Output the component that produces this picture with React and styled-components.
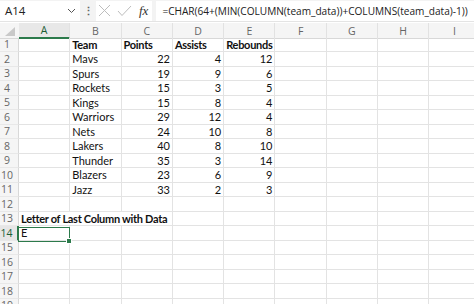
import React from "react";
import styled, { createGlobalStyle } from "styled-components";

const Global = createGlobalStyle`
  html, body { margin: 0; padding: 0; background: #fff; }
  body { width: 474px; height: 304px; overflow: hidden; }
`;

const COLS = ["A", "B", "C", "D", "E", "F", "G", "H", "I"];
const ROWH = 14.5;
const COLW = 51.3;

const data = [
  ["Mavs", 22, 4, 12],
  ["Spurs", 19, 9, 6],
  ["Rockets", 15, 3, 5],
  ["Kings", 15, 8, 4],
  ["Warriors", 29, 12, 4],
  ["Nets", 24, 10, 8],
  ["Lakers", 40, 8, 10],
  ["Thunder", 35, 3, 14],
  ["Blazers", 23, 6, 9],
  ["Jazz", 33, 2, 3],
];

const Page = styled.div`
  width: 474px;
  height: 304px;
  overflow: hidden;
  background: #fff;
  font-family: "Open Sans", sans-serif;
`;

const FormulaBar = styled.div`
  display: flex;
  align-items: center;
  height: 21px;
  background: #f3f3f3;
  border-bottom: 1px solid #e4e4e4;
`;

const NameBox = styled.div`
  width: 80px;
  height: 20px;
  box-sizing: border-box;
  background: #fff;
  display: flex;
  align-items: center;
  justify-content: space-between;
  padding: 0 4px 0 5px;
  font-size: 11.5px;
  color: #222;
`;

const Dots = styled.div`
  width: 16px;
  display: flex;
  justify-content: center;
  color: #666;
  font-size: 11px;
  font-weight: bold;
`;

const IconBox = styled.div`
  display: flex;
  align-items: center;
  gap: 6px;
  height: 20px;
  padding: 0 4px 0 2px;
  background: #fff;
`;

const Fx = styled.span`
  font-family: "Liberation Serif", serif;
  font-style: italic;
  font-size: 13px;
  color: #333;
  margin-left: 1px;
`;

const FormulaText = styled.div`
  flex: 1;
  height: 20px;
  margin-left: 4px;
  background: #fff;
  display: flex;
  align-items: center;
  padding-left: 6px;
  font-size: 10.1px;
  color: #222;
  white-space: nowrap;
  overflow: hidden;
`;

const Grid = styled.div`
  display: grid;
  grid-template-columns: 19px repeat(9, ${COLW}px);
  grid-auto-rows: ${ROWH}px;
  margin-top: 1px;
  position: relative;
`;

const Corner = styled.div`
  height: 16px;
  background: #f5f5f5;
  border-bottom: 1px solid #d8d8d8;
  box-sizing: border-box;
  position: relative;
`;

const ColHead = styled.div`
  height: 16px;
  box-sizing: border-box;
  background: ${(p) => (p.$active ? "#e8e8e8" : "#f5f5f5")};
  border-right: 1px solid #e2e2e2;
  border-bottom: ${(p) => (p.$active ? "2px solid #2c7a4b" : "1px solid #d8d8d8")};
  display: flex;
  align-items: center;
  justify-content: center;
  font-size: 10.5px;
  color: ${(p) => (p.$active ? "#1d5e36" : "#666")};
`;

const HeadRow = styled.div`
  display: contents;
`;

const RowHead = styled.div`
  background: ${(p) => (p.$active ? "#e6e6e6" : "#f5f5f5")};
  border-bottom: 1px solid #e8e8e8;
  border-right: ${(p) => (p.$active ? "2px solid #2c7a4b" : "1px solid #d8d8d8")};
  box-sizing: border-box;
  display: flex;
  align-items: center;
  justify-content: center;
  padding-right: 4px;
  font-size: 10.5px;
  color: ${(p) => (p.$active ? "#1d5e36" : "#666")};
  line-height: 1;
`;

const Cell = styled.div`
  border-right: 1px solid #e3e3e3;
  border-bottom: 1px solid #e3e3e3;
  box-sizing: border-box;
  display: flex;
  align-items: center;
  justify-content: ${(p) => (p.$num ? "flex-end" : "flex-start")};
  padding: 0 2px 0 2px;
  font-family: Lato, sans-serif;
  font-size: 11px;
  font-weight: ${(p) => (p.$bold ? 700 : 400)};
  letter-spacing: ${(p) => (p.$bold ? "-0.3px" : "0")};
  color: #111;
  white-space: nowrap;
  overflow: visible;
`;

const Overflow = styled.span`
  position: relative;
  z-index: 2;
  background: #fff;
  padding-right: 2px;
`;

const Selection = styled.div`
  position: absolute;
  left: 18px;
  top: ${16 + 13 * ROWH - 1}px;
  width: ${COLW + 1}px;
  height: ${ROWH + 1}px;
  border: 1.5px solid #2c7a4b;
  box-sizing: border-box;
  pointer-events: none;
  z-index: 3;
`;

const Handle = styled.div`
  position: absolute;
  right: -3px;
  bottom: -3px;
  width: 4px;
  height: 4px;
  background: #2c7a4b;
  border: 1px solid #fff;
`;

function CornerTriangle() {
  return (
    <svg width="19" height="16" style={{ position: "absolute", left: 0, top: 0 }}>
      <polygon points="5,13 15,13 15,4" fill="#c9c9c9" />
    </svg>
  );
}

export default function App() {
  const rows = [];
  rows.push(["", "Team", "Points", "Assists", "Rebounds"]);
  data.forEach((d) => rows.push(["", ...d]));
  rows.push([]);
  rows.push(["Letter of Last Column with Data"]);
  rows.push(["E"]);
  for (let i = 0; i < 6; i++) rows.push([]);

  return (
    <Page>
      <Global />
      <FormulaBar>
        <NameBox>
          <span>A14</span>
          <svg width="9" height="6" viewBox="0 0 9 6">
            <path d="M1 1 L4.5 4.5 L8 1" fill="none" stroke="#555" strokeWidth="1" />
          </svg>
        </NameBox>
        <Dots>⋮</Dots>
        <IconBox>
          <svg width="13" height="13" viewBox="0 0 13 13">
            <path d="M1 1 L12 12 M12 1 L1 12" stroke="#bdbdbd" strokeWidth="1" />
          </svg>
          <svg width="15" height="12" viewBox="0 0 15 12">
            <path d="M1 6 L5 10.5 L14 1" fill="none" stroke="#bdbdbd" strokeWidth="1" />
          </svg>
          <Fx>fx</Fx>
        </IconBox>
        <FormulaText>=CHAR(64+(MIN(COLUMN(team_data))+COLUMNS(team_data)-1))</FormulaText>
      </FormulaBar>
      <Grid>
        <HeadRow>
          <Corner>
            <CornerTriangle />
          </Corner>
          {COLS.map((c) => (
            <ColHead key={c} $active={c === "A"}>
              {c}
            </ColHead>
          ))}
        </HeadRow>
        {rows.map((r, i) => (
          <HeadRow key={i}>
            <RowHead $active={i === 13}>{i + 1}</RowHead>
            {COLS.map((c, j) => {
              const v = r[j];
              const isNum = typeof v === "number";
              return (
                <Cell key={c} $num={isNum} $bold={i === 0 || i === 12}>
                  {i === 12 && j === 0 ? <Overflow>{v}</Overflow> : v}
                </Cell>
              );
            })}
          </HeadRow>
        ))}
        <Selection>
          <Handle />
        </Selection>
      </Grid>
    </Page>
  );
}
